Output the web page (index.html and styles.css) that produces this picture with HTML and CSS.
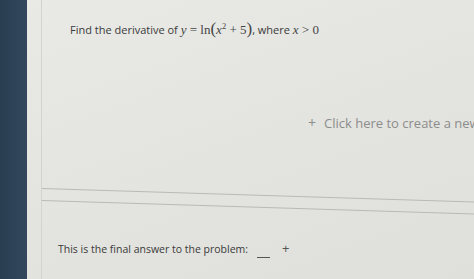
FILE: index.html
```html
<!DOCTYPE html>
<html>
<head>
<meta charset="utf-8">
<link rel="stylesheet" href="styles.css">
</head>
<body>
<div class="screen">
  <div class="sidebar"></div>
  <div class="main">
    <div class="card">
      <p class="question">Find the derivative of <span class="math"><i>y</i> = ln<span class="paren">(</span><i>x</i><sup>2</sup> + 5<span class="paren">)</span></span>, where <span class="math"><i>x</i> &gt; 0</span></p>
      <div class="create"><span class="plus">+</span><span class="create-text">Click here to create a new part</span></div>
      <div class="dividers">
        <div class="rule"></div>
        <div class="rule"></div>
      </div>
      <p class="answer">This is the final answer to the problem: <span class="blank"></span><span class="add">+</span></p>
    </div>
  </div>
</div>
</body>
</html>
```
FILE: styles.css
```css
html, body {
  margin: 0;
  padding: 0;
  width: 474px;
  height: 279px;
  overflow: hidden;
}
.screen {
  display: flex;
  width: 474px;
  height: 279px;
  background: #e3e4df;
}
.sidebar {
  width: 27px;
  flex: none;
  background: linear-gradient(90deg, #2a3e52 0%, #33485c 100%);
}
.main {
  flex: 1;
  display: flex;
  padding-left: 14px;
  background: linear-gradient(160deg, #e9eae6 0%, #e3e4df 55%, #dfe0db 100%);
  overflow: hidden;
}
.card {
  flex: 1;
  border-left: 1px solid #d3d4ce;
  display: flex;
  flex-direction: column;
  font-family: "Open Sans", sans-serif;
  color: #3a3a3a;
  min-width: 0;
}
.question {
  margin: 19px 0 0 28px;
  font-size: 11px;
  white-space: nowrap;
}
.math {
  font-family: "Liberation Serif", "DejaVu Serif", serif;
  font-size: 13px;
  color: #444;
}
.math sup {
  font-size: 8.5px;
}
.paren {
  font-size: 17px;
  font-weight: 300;
}
.create {
  margin: 74px 0 0 266px;
  display: flex;
  align-items: baseline;
  gap: 8px;
  color: #8c8c8c;
  font-size: 13px;
  white-space: nowrap;
}
.plus {
  font-size: 14px;
}
.dividers {
  margin-top: 56px;
  display: flex;
  flex-direction: column;
  gap: 11px;
  transform: rotate(1.8deg);
  transform-origin: left center;
}
.rule {
  height: 1px;
  background: #b9bab5;
  margin-right: -20px;
}
.answer {
  margin: 38px 0 0 16px;
  font-size: 10.5px;
  white-space: nowrap;
  display: flex;
  align-items: baseline;
}
.blank {
  display: inline-block;
  width: 13px;
  height: 1px;
  background: #555;
  margin-left: 9px;
  position: relative;
  top: 5px;
}
.add {
  margin-left: 12px;
  font-size: 13px;
  color: #555;
}
```
